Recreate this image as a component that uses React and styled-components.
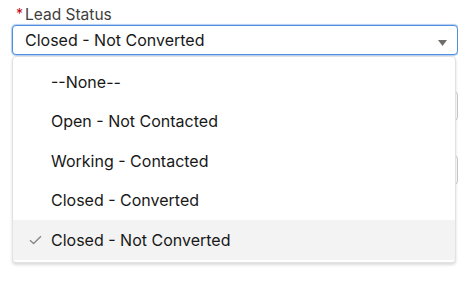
import React from 'react';
import styled, { createGlobalStyle } from 'styled-components';

const GlobalStyle = createGlobalStyle`
  html, body {
    margin: 0;
    padding: 0;
    background: #ffffff;
  }
  body {
    font-family: "Inter", "Noto Sans", "Liberation Sans", sans-serif;
    color: #181818;
    -webkit-font-smoothing: antialiased;
  }
`;

const Form = styled.div`
  position: relative;
  width: 458px;
  height: 287px;
  padding: 4px 0 0 12px;
  box-sizing: border-box;
  overflow: hidden;
`;

const Field = styled.div`
  display: flex;
  flex-direction: column;
  margin-bottom: ${props => props.gap || 0}px;
`;

const Label = styled.label`
  display: flex;
  align-items: center;
  height: 20px;
  margin-bottom: 1px;
  padding-left: 4px;
  font-size: 15.5px;
  color: #3e3e3c;
`;

const Required = styled.abbr`
  color: #ba0517;
  font-size: 14px;
  margin-right: 2px;
  text-decoration: none;
  position: relative;
  top: -1px;
`;

const Combobox = styled.div`
  display: flex;
  align-items: center;
  justify-content: space-between;
  height: 30px;
  box-sizing: border-box;
  padding: 0 10px 0 12px;
  border: 1px solid ${props => (props.focused ? '#4f8fe0' : '#c9c9c9')};
  border-radius: 4px;
  box-shadow: ${props => (props.focused ? '0 0 1px 1px rgba(79, 143, 224, 0.45)' : 'none')};
  background: #fff;
  font-size: 16px;
  color: #181818;
`;

const Caret = styled.svg`
  width: 9px;
  height: 6px;
  margin-top: 5px;
  fill: #706e6b;
`;

const Listbox = styled.ul`
  position: absolute;
  top: 56px;
  left: 12px;
  width: 444px;
  margin: 0;
  padding: 5px 0 2px;
  box-sizing: border-box;
  list-style: none;
  background: #fff;
  border: 1px solid #e2e2e2;
  border-radius: 4px;
  box-shadow: 0 2px 3px rgba(0, 0, 0, 0.14);
`;

const Option = styled.li`
  display: flex;
  align-items: center;
  height: 39.5px;
  padding-left: 14px;
  gap: 8px;
  font-size: 16px;
  color: #181818;
  background: ${props => (props.selected ? '#f3f3f3' : 'transparent')};
`;

const CheckSlot = styled.span`
  display: flex;
  align-items: center;
  justify-content: center;
  width: 16px;
  height: 16px;
`;

const options = [
  '--None--',
  'Open - Not Contacted',
  'Working - Contacted',
  'Closed - Converted',
  'Closed - Not Converted',
];

const selected = 'Closed - Not Converted';

const Check = () => (
  <svg width="13" height="10" viewBox="0 0 13 10">
    <path d="M1 5.2 L4.6 8.6 L12 1.2" fill="none" stroke="#8a8886" strokeWidth="1.4" />
  </svg>
);

const App = () => {
  return (
    <>
      <GlobalStyle />
      <Form>
        <Field gap={15}>
          <Label>
            <Required title="required">*</Required>
            Lead Status
          </Label>
          <Combobox focused>
            {selected}
            <Caret viewBox="0 0 9 6">
              <path d="M0 0 H9 L4.5 6 Z" />
            </Caret>
          </Combobox>
        </Field>
        {/* fields hidden under the open listbox; only their edges peek out */}
        <Field gap={13}>
          <Label />
          <Combobox />
        </Field>
        <Field>
          <Label />
          <Combobox />
        </Field>

        <Listbox role="listbox">
          {options.map(o => (
            <Option key={o} selected={o === selected}>
              <CheckSlot>{o === selected && <Check />}</CheckSlot>
              {o}
            </Option>
          ))}
        </Listbox>
      </Form>
    </>
  );
};

export default App;
